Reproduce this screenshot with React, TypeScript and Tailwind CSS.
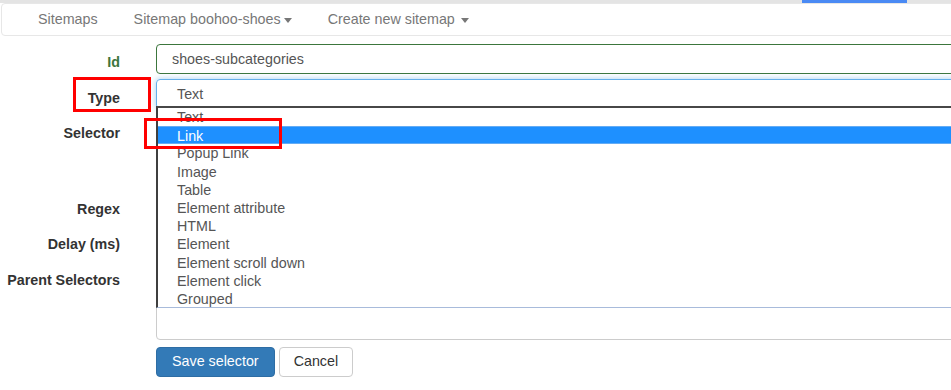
const typeOptions = [
  "Text",
  "Link",
  "Popup Link",
  "Image",
  "Table",
  "Element attribute",
  "HTML",
  "Element",
  "Element scroll down",
  "Element click",
  "Grouped",
];

function Caret() {
  return (
    <span className="inline-block h-0 w-0 border-x-[4.5px] border-t-[5px] border-x-transparent border-t-[#777] align-middle" />
  );
}

function Label({ text, green, low }: { text: string; green?: boolean; low?: boolean }) {
  return (
    <label
      className={`w-[120px] shrink-0 text-right font-bold leading-[20px] ${
        low ? "pt-[9px]" : "pt-[8px]"
      } ${green ? "text-[#3c763d]" : "text-[#333]"}`}
    >
      {text}
    </label>
  );
}

export default function App() {
  return (
    <div className="relative h-[390px] w-[951px] overflow-hidden bg-white font-['Liberation_Sans',Arial,sans-serif] text-[14.3px] text-[#333]">
      {/* top strip */}
      <div className="flex h-[3px] bg-[#e4e4e4]">
        <div className="w-[802px]" />
        <div className="w-[105px] bg-[#4a8af4]" />
      </div>

      {/* navbar */}
      <div className="ml-[1px] flex h-[33px] w-[980px] items-center rounded-[4px] border border-[#e7e7e7] bg-white pl-[18px] pt-[1px] text-[#777]">
        <span className="px-[18px]">Sitemaps</span>
        <span className="px-[18px]">
          Sitemap boohoo-shoes<span className="ml-[3px]"><Caret /></span>
        </span>
        <span className="px-[18px]">
          Create new sitemap <span className="ml-[2px]"><Caret /></span>
        </span>
      </div>

      {/* form */}
      <div className="mt-[8px] flex flex-col gap-[5px]">
        <div className="flex h-[30px] gap-[36px]">
          <Label text="Id" green />
          <div className="w-[810px] shrink-0">
            <div className="flex h-full items-center rounded-[4px] border border-[#3c763d] px-[15px] pt-[1px] text-[#555]">
              shoes-subcategories
            </div>
          </div>
        </div>

        <div className="flex h-[31px] gap-[36px]">
          <Label text="Type" low />
          <div className="relative w-[810px] shrink-0">
            <div className="flex h-[30px] items-center rounded-[4px] border border-[#66afe9] pl-[20px] pt-[2px] text-[#555] shadow-[0_0_6px_rgba(102,175,233,0.6)]">
              Text
            </div>
            <div className="absolute left-0 top-[27px] z-10 h-[202px] w-full border-l-2 border-t-2 border-b border-l-[#3f3f3f] border-t-[#474747] border-b-[#a8bbdb] bg-white text-[#555]">
              {typeOptions.map((opt) => (
                <div
                  key={opt}
                  className={`h-[18.2px] pl-[19px] leading-[18px] ${
                    opt === "Link"
                      ? "border-y border-[#64acf4] bg-[#1e90ff] text-white"
                      : ""
                  }`}
                >
                  {opt}
                </div>
              ))}
            </div>
          </div>
        </div>

        <div className="flex h-[71px] gap-[36px]">
          <Label text="Selector" />
          <div className="w-[810px] shrink-0">
            <div className="h-[30px] rounded-[4px] border border-[#ccc]" />
          </div>
        </div>

        <div className="flex h-[30px] gap-[36px]">
          <Label text="Regex" />
          <div className="w-[810px] shrink-0">
            <div className="h-full rounded-[4px] border border-[#ccc]" />
          </div>
        </div>

        <div className="flex h-[31px] gap-[36px]">
          <Label text="Delay (ms)" />
          <div className="w-[810px] shrink-0">
            <div className="h-[30px] rounded-[4px] border border-[#ccc]" />
          </div>
        </div>

        <div className="flex h-[78px] gap-[36px]">
          <Label text="Parent Selectors" />
          <div className="w-[810px] shrink-0">
            <div className="h-full rounded-[4px] border border-[#ccc]" />
          </div>
        </div>

        <div className="mt-[2px] flex gap-[4px] pl-[156px]">
          <button className="h-[30px] rounded-[4px] border border-[#2e6da4] bg-[#337ab7] px-[15px] text-white">
            Save selector
          </button>
          <button className="h-[30px] rounded-[4px] border border-[#ccc] bg-white px-[14px] text-[#333]">
            Cancel
          </button>
        </div>
      </div>

      {/* annotation boxes */}
      <div className="absolute left-[73px] top-[77px] z-20 h-[35px] w-[78px] border-[3px] border-[#ff0000]" />
      <div className="absolute left-[144px] top-[118px] z-20 h-[31px] w-[138px] border-[3px] border-[#ff0000]" />
    </div>
  );
}
